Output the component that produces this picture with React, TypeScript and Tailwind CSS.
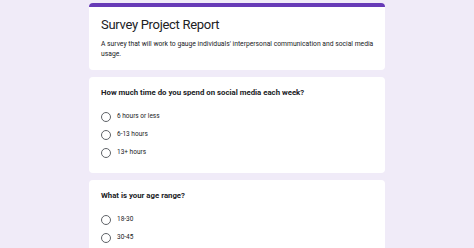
import React from 'react';

const Radio = ({ label }: { label: string }) => (
  <div className="flex h-[18px] items-center gap-[6px]">
    <span className="h-[10px] w-[10px] shrink-0 rounded-full border-[1.5px] border-[#5f6368]" />
    <span className="text-[6.5px] text-[#202124]">{label}</span>
  </div>
);

const Question = ({ title, options }: { title: string; options: string[] }) => (
  <div className="w-[296px] shrink-0 rounded-[4px] bg-white px-[12px] pt-[11px] pb-[11px]">
    <div className="text-[7.8px] font-bold leading-[10px] text-[#202124]">{title}</div>
    <div className="mt-[10px] flex flex-col">
      {options.map((o) => (
        <Radio key={o} label={o} />
      ))}
    </div>
  </div>
);

export default function App() {
  return (
    <div
      className="flex h-[248px] w-[474px] flex-col items-center gap-[7px] overflow-hidden bg-[#f0ebf8] pt-[3px]"
      style={{ fontFamily: 'Roboto, "Liberation Sans", sans-serif' }}
    >
      <div className="w-[296px] shrink-0 rounded-[4px] border-t-[4px] border-[#673ab7] bg-white pl-[12px] pr-[4px] pt-[7px] pb-[11px]">
        <h1 className="text-[13px] leading-[22px] tracking-[-0.3px] text-[#202124]">
          Survey Project Report
        </h1>
        <p className="mt-[3px] text-[6.75px] leading-[10px] text-[#202124]">
          A survey that will work to gauge individuals' interpersonal communication and social media usage.
        </p>
      </div>
      <Question
        title="How much time do you spend on social media each week?"
        options={['6 hours or less', '6-13 hours', '13+ hours']}
      />
      <Question title="What is your age range?" options={['18-30', '30-45']} />
    </div>
  );
}
